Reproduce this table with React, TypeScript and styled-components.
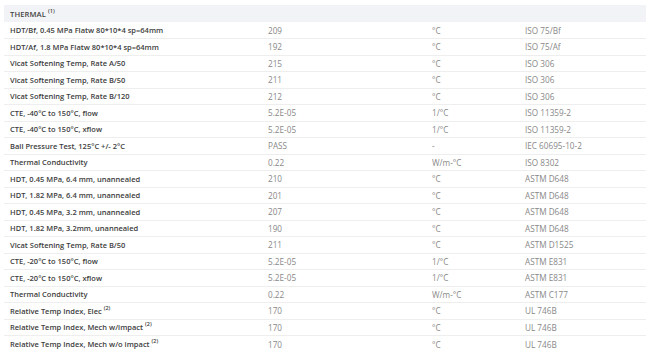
import React from "react";
import styled, { createGlobalStyle } from "styled-components";

const Global = createGlobalStyle`
  html, body { margin: 0; padding: 0; background: #fff; }
  body { font-family: "Open Sans", "Noto Sans", sans-serif; }
`;

const Wrap = styled.div`
  padding: 5px 4px 0 4px;
`;

const Table = styled.table`
  width: 642px;
  border-collapse: collapse;
  table-layout: fixed;
  font-size: 7.5px;
`;

const HeadRow = styled.tr`
  background: #f1f3f6;
  height: 17px;
`;

const HeadCell = styled.th`
  text-align: left;
  font-weight: 600;
  color: #444;
  padding: 0 0 0 6px;
  font-size: 7.6px;
  letter-spacing: 0.1px;
`;

const Row = styled.tr`
  height: 16.5px;
  border-top: 1px solid #eeeeee;
  &:first-child { border-top: none; }
`;

const Cell = styled.td<{ $strong?: boolean }>`
  padding: 0 0 0 6px;
  color: ${(p) => (p.$strong ? "#3d3d3d" : "#888888")};
  font-weight: ${(p) => (p.$strong ? 600 : 400)};
  font-size: ${(p) => (p.$strong ? "7.5px" : "8.2px")};
  white-space: nowrap;
  vertical-align: middle;
`;

const Sup = styled.sup`
  font-size: 5.5px;
  vertical-align: 4px;
  line-height: 0;
  margin-left: 2px;
  font-weight: 600;
`;

type R = [string, string, string, string, string?];

const rows: R[] = [
  ["HDT/Bf, 0.45 MPa Flatw 80*10*4 sp=64mm", "209", "°C", "ISO 75/Bf"],
  ["HDT/Af, 1.8 MPa Flatw 80*10*4 sp=64mm", "192", "°C", "ISO 75/Af"],
  ["Vicat Softening Temp, Rate A/50", "215", "°C", "ISO 306"],
  ["Vicat Softening Temp, Rate B/50", "211", "°C", "ISO 306"],
  ["Vicat Softening Temp, Rate B/120", "212", "°C", "ISO 306"],
  ["CTE, -40°C to 150°C, flow", "5.2E-05", "1/°C", "ISO 11359-2"],
  ["CTE, -40°C to 150°C, xflow", "5.2E-05", "1/°C", "ISO 11359-2"],
  ["Ball Pressure Test, 125°C +/- 2°C", "PASS", "-", "IEC 60695-10-2"],
  ["Thermal Conductivity", "0.22", "W/m-°C", "ISO 8302"],
  ["HDT, 0.45 MPa, 6.4 mm, unannealed", "210", "°C", "ASTM D648"],
  ["HDT, 1.82 MPa, 6.4 mm, unannealed", "201", "°C", "ASTM D648"],
  ["HDT, 0.45 MPa, 3.2 mm, unannealed", "207", "°C", "ASTM D648"],
  ["HDT, 1.82 MPa, 3.2mm, unannealed", "190", "°C", "ASTM D648"],
  ["Vicat Softening Temp, Rate B/50", "211", "°C", "ASTM D1525"],
  ["CTE, -20°C to 150°C, flow", "5.2E-05", "1/°C", "ASTM E831"],
  ["CTE, -20°C to 150°C, xflow", "5.2E-05", "1/°C", "ASTM E831"],
  ["Thermal Conductivity", "0.22", "W/m-°C", "ASTM C177"],
  ["Relative Temp Index, Elec", "170", "°C", "UL 746B", "(2)"],
  ["Relative Temp Index, Mech w/impact", "170", "°C", "UL 746B", "(2)"],
  ["Relative Temp Index, Mech w/o impact", "170", "°C", "UL 746B", "(2)"],
];

export default function App() {
  return (
    <Wrap>
      <Global />
      <Table>
        <colgroup>
          <col style={{ width: 258 }} />
          <col style={{ width: 164 }} />
          <col style={{ width: 93 }} />
          <col style={{ width: 127 }} />
        </colgroup>
        <thead>
          <HeadRow>
            <HeadCell>
              THERMAL<Sup>(1)</Sup>
            </HeadCell>
            <HeadCell />
            <HeadCell />
            <HeadCell />
          </HeadRow>
        </thead>
        <tbody>
          {rows.map((r, i) => (
            <Row key={i}>
              <Cell $strong>
                {r[0]}
                {r[4] && <Sup>{r[4]}</Sup>}
              </Cell>
              <Cell>{r[1]}</Cell>
              <Cell>{r[2]}</Cell>
              <Cell>{r[3]}</Cell>
            </Row>
          ))}
        </tbody>
      </Table>
    </Wrap>
  );
}
